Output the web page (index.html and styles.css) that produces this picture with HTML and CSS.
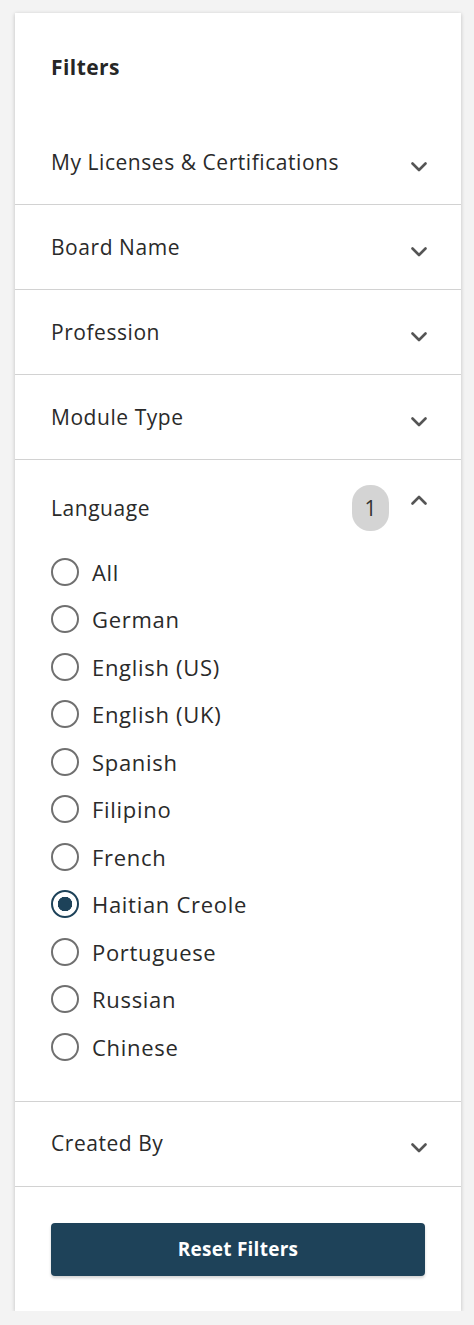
FILE: index.html
```html
<!DOCTYPE html>
<html lang="en">
<head>
<meta charset="utf-8">
<title>Filters</title>
<link rel="stylesheet" href="styles.css">
</head>
<body>
<div class="card">
  <h2 class="title">Filters</h2>

  <div class="section">
    <div class="header"><span class="label">My Licenses &amp; Certifications</span>
      <svg class="chev" viewBox="0 0 16 10"><path d="M1.5 1.5 L8 8 L14.5 1.5"/></svg></div>
  </div>
  <div class="section">
    <div class="header"><span class="label">Board Name</span>
      <svg class="chev" viewBox="0 0 16 10"><path d="M1.5 1.5 L8 8 L14.5 1.5"/></svg></div>
  </div>
  <div class="section">
    <div class="header"><span class="label">Profession</span>
      <svg class="chev" viewBox="0 0 16 10"><path d="M1.5 1.5 L8 8 L14.5 1.5"/></svg></div>
  </div>
  <div class="section">
    <div class="header"><span class="label">Module Type</span>
      <svg class="chev" viewBox="0 0 16 10"><path d="M1.5 1.5 L8 8 L14.5 1.5"/></svg></div>
  </div>

  <div class="section open">
    <div class="header lang-header"><span class="label">Language</span>
      <div class="right"><span class="badge">1</span>
      <svg class="chev up" viewBox="0 0 16 10"><path d="M1.5 8.5 L8 2 L14.5 8.5"/></svg></div></div>
    <ul class="options">
      <li class="opt"><span class="radio"></span>All</li>
      <li class="opt"><span class="radio"></span>German</li>
      <li class="opt"><span class="radio"></span>English (US)</li>
      <li class="opt"><span class="radio"></span>English (UK)</li>
      <li class="opt"><span class="radio"></span>Spanish</li>
      <li class="opt"><span class="radio"></span>Filipino</li>
      <li class="opt"><span class="radio"></span>French</li>
      <li class="opt"><span class="radio checked"></span>Haitian Creole</li>
      <li class="opt"><span class="radio"></span>Portuguese</li>
      <li class="opt"><span class="radio"></span>Russian</li>
      <li class="opt"><span class="radio"></span>Chinese</li>
    </ul>
  </div>

  <div class="section">
    <div class="header"><span class="label">Created By</span>
      <svg class="chev" viewBox="0 0 16 10"><path d="M1.5 1.5 L8 8 L14.5 1.5"/></svg></div>
  </div>

  <div class="footer">
    <button class="reset">Reset Filters</button>
  </div>
</div>
</body>
</html>
```

FILE: styles.css
```css
html, body {
  margin: 0;
  padding: 0;
  background: #f3f3f3;
}
body {
  padding-top: 13px;
  font-family: "Open Sans", "Liberation Sans", sans-serif;
  color: #2a2a2a;
}
.card {
  margin-left: 15px;
  width: 446px;
  background: #fff;
  box-shadow: 0 1px 4px rgba(0, 0, 0, 0.22);
}
.title {
  margin: 0;
  height: 107px;
  padding: 0 36px;
  display: flex;
  align-items: center;
  font-size: 21px;
  letter-spacing: 0.45px;
  font-weight: 700;
  color: #262626;
}
.section {
  border-bottom: 1px solid #d2d2d2;
}
.header {
  height: 84px;
  padding: 0 34px 0 36px;
  display: flex;
  align-items: center;
  justify-content: space-between;
}
.label {
  font-size: 21px;
  letter-spacing: 0.55px;
  color: #2a2a2a;
  margin-top: -1px;
}
.chev {
  width: 16px;
  height: 10px;
  fill: none;
  stroke: #555;
  stroke-width: 2.6;
  stroke-linecap: round;
  stroke-linejoin: round;
  margin-top: 9px;
}
.chev.up {
  margin-top: -15px;
}
.lang-header {
  height: 47px;
  padding-top: 24px;
}
.lang-header .label {
  margin-top: 0;
}
.right {
  display: flex;
  align-items: center;
  gap: 22px;
}
.badge {
  width: 37px;
  height: 46px;
  border-radius: 18px;
  background: #d4d4d4;
  display: flex;
  align-items: center;
  justify-content: center;
  font-size: 21px;
  color: #333;
}
.options {
  list-style: none;
  margin: 0;
  padding: 17px 0 30px 36px;
}
.opt {
  height: 47.5px;
  display: flex;
  align-items: center;
  font-size: 22px;
  letter-spacing: 0.7px;
  color: #2a2a2a;
}
.radio {
  box-sizing: border-box;
  width: 28px;
  height: 28px;
  border: 2.5px solid #707070;
  border-radius: 50%;
  margin-right: 13px;
  flex: none;
}
.radio.checked {
  border-color: #1d4259;
  background: radial-gradient(circle, #1d4259 0 7px, #fff 7.5px);
}
.footer {
  padding: 36px 36px 35px 36px;
}
.reset {
  display: block;
  width: 100%;
  height: 53px;
  border: none;
  border-radius: 4px;
  background: #1e4259;
  color: #fff;
  font-family: "Open Sans", "Liberation Sans", sans-serif;
  font-size: 19px;
  letter-spacing: 0.25px;
  font-weight: 700;
  box-shadow: 0 2px 3px rgba(0, 0, 0, 0.18);
}
```
